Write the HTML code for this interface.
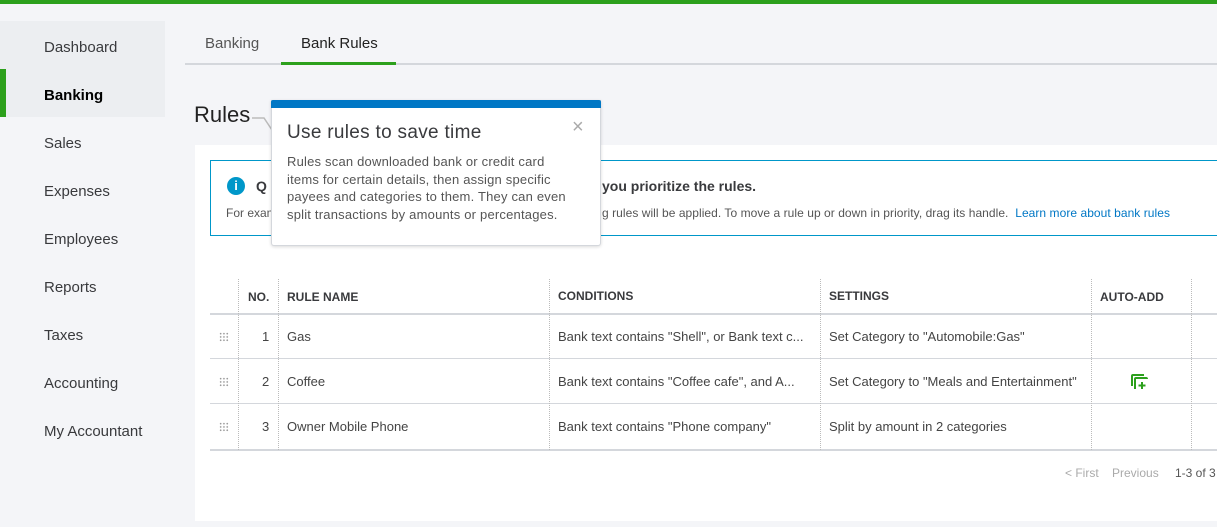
<!DOCTYPE html>
<html><head><style>
*{margin:0;padding:0;box-sizing:border-box}
body{width:1217px;height:527px;overflow:hidden;background:#f4f5f8;font-family:"Liberation Sans",sans-serif;position:relative;color:#393a3d}
.top{position:absolute;left:0;top:0;width:1217px;height:4px;background:#2ca01c}
.side{position:absolute;left:0;top:24px;width:165px}
.side div{height:48px;line-height:48px;padding-left:44px;font-size:15px;color:#393a3d}
.tab{position:absolute;top:35px;font-size:15px}
.card{position:absolute;left:195px;top:145px;width:1030px;height:376px;background:#fff}
.info{position:absolute;left:210px;top:160px;width:1020px;height:76px;border:1px solid #0097c9;border-right:none}
.abs{position:absolute;white-space:nowrap}
.h{font-size:12px;font-weight:bold;color:#393a3d}
.c{font-size:13px;color:#444}
.hl{position:absolute;height:1px;background:#d4d7dc}
.vl{position:absolute;width:0;border-left:1px dotted #bbb}
.grip{position:absolute;width:10px;height:10px;background-image:radial-gradient(#999 0.8px,transparent 1px);background-size:3.3px 3.3px}
</style></head><body>
<div class="top"></div>
<div style="position:absolute;left:0;top:21px;width:165px;height:96px;background:#eceef1"></div>
<div style="position:absolute;left:0;top:69px;width:6px;height:48px;background:#2ca01c"></div>
<div class="side">
<div>Dashboard</div><div style="font-weight:bold;color:#000">Banking</div><div>Sales</div><div>Expenses</div><div>Employees</div><div>Reports</div><div>Taxes</div><div>Accounting</div><div>My Accountant</div>
</div>
<div class="tab" style="left:205px;color:#555">Banking</div>
<div class="tab" style="left:301px;color:#222">Bank Rules</div>
<div style="position:absolute;left:185px;top:63px;width:1032px;height:2px;background:#d4d7dc"></div>
<div style="position:absolute;left:281px;top:62px;width:115px;height:3px;background:#2ca01c"></div>
<div class="abs" style="left:194px;top:102px;font-size:22px;color:#222">Rules</div>
<div class="card"></div>
<div class="info"></div>
<div style="position:absolute;left:227px;top:177px;width:18px;height:18px;border-radius:50%;background:#0097c9;color:#fff;font-weight:bold;font-size:13px;text-align:center;line-height:18px">i</div>
<div class="abs" style="left:256px;top:178px;font-size:14px;font-weight:bold;color:#393a3d">Q</div>
<div class="abs" style="left:226px;top:206px;font-size:12px;color:#555">For exam</div>
<div class="abs" style="left:602px;top:178px;font-size:14px;font-weight:bold;color:#393a3d">you prioritize the rules.</div>
<div class="abs" style="left:602px;top:206px;font-size:12px;color:#555;letter-spacing:0.05px">g rules will be applied. To move a rule up or down in priority, drag its handle.&nbsp; <span style="color:#0077c5">Learn more about bank rules</span></div>

<div class="hl" style="left:210px;top:313px;width:1007px;height:2px"></div>
<div class="hl" style="left:210px;top:358px;width:1007px"></div>
<div class="hl" style="left:210px;top:403px;width:1007px"></div>
<div class="hl" style="left:210px;top:449px;width:1007px;height:2px"></div>
<div class="vl" style="left:238px;top:279px;height:171px"></div>
<div class="vl" style="left:278px;top:279px;height:171px"></div>
<div class="vl" style="left:549px;top:279px;height:171px"></div>
<div class="vl" style="left:820px;top:279px;height:171px"></div>
<div class="vl" style="left:1091px;top:279px;height:171px"></div>
<div class="vl" style="left:1191px;top:279px;height:171px"></div>
<div class="abs h" style="left:248px;top:290px">NO.</div>
<div class="abs h" style="left:287px;top:290px">RULE NAME</div>
<div class="abs h" style="left:558px;top:289px">CONDITIONS</div>
<div class="abs h" style="left:829px;top:289px">SETTINGS</div>
<div class="abs h" style="left:1100px;top:290px">AUTO-ADD</div>
<div class="grip" style="left:219px;top:332px"></div>
<div class="grip" style="left:219px;top:377px"></div>
<div class="grip" style="left:219px;top:422px"></div>
<div class="abs c" style="left:262px;top:329px">1</div>
<div class="abs c" style="left:262px;top:374px">2</div>
<div class="abs c" style="left:262px;top:419px">3</div>
<div class="abs c" style="left:287px;top:329px">Gas</div>
<div class="abs c" style="left:287px;top:374px">Coffee</div>
<div class="abs c" style="left:287px;top:419px">Owner Mobile Phone</div>
<div class="abs c" style="left:558px;top:329px">Bank text contains "Shell", or Bank text c...</div>
<div class="abs c" style="left:558px;top:374px">Bank text contains "Coffee cafe", and A...</div>
<div class="abs c" style="left:558px;top:419px">Bank text contains "Phone company"</div>
<div class="abs c" style="left:829px;top:329px">Set Category to "Automobile:Gas"</div>
<div class="abs c" style="left:829px;top:374px">Set Category to "Meals and Entertainment"</div>
<div class="abs c" style="left:829px;top:419px">Split by amount in 2 categories</div>
<svg style="position:absolute;left:1130px;top:373px" width="20" height="18" viewBox="0 0 20 18" fill="none" stroke="#2ca01c" stroke-width="2"><path d="M2 13V3a1 1 0 0 1 1-1h11"/><path d="M5 16V6a1 1 0 0 1 1-1h10a1 1 0 0 1 1 1"/><path d="M12 9v7M8.5 12.5h7"/></svg>
<div class="abs" style="left:1065px;top:466px;font-size:12px;color:#aaa">&lt; First &nbsp;&nbsp; Previous</div>
<div class="abs" style="left:1175px;top:466px;font-size:12px;color:#555">1-3 of 3</div>

<svg style="position:absolute;left:252px;top:117px" width="22" height="14"><path d="M0 1 H12 L20 13" fill="none" stroke="#bbb" stroke-width="1.5"/></svg>
<div style="position:absolute;left:271px;top:100px;width:330px;height:146px;background:#fff;border:1px solid #d4d7dc;border-top:none;border-radius:0 0 3px 3px;box-shadow:0 1px 3px rgba(0,0,0,.15)">
<div style="height:8px;background:#0077c5;border-radius:2px 2px 0 0;margin:0 -1px"></div>
<div class="abs" style="left:15px;top:22px;font-size:19px;color:#393a3d;letter-spacing:0.3px">Use rules to save time</div>
<div class="abs" style="left:300px;top:16px;font-size:20px;color:#aaa">×</div>
<div style="position:absolute;left:15px;top:53px;width:285px;font-size:13px;line-height:17.5px;color:#555;letter-spacing:0.2px">Rules scan downloaded bank or credit card items for certain details, then assign specific payees and categories to them. They can even split transactions by amounts or percentages.</div>
</div>
</body></html>
